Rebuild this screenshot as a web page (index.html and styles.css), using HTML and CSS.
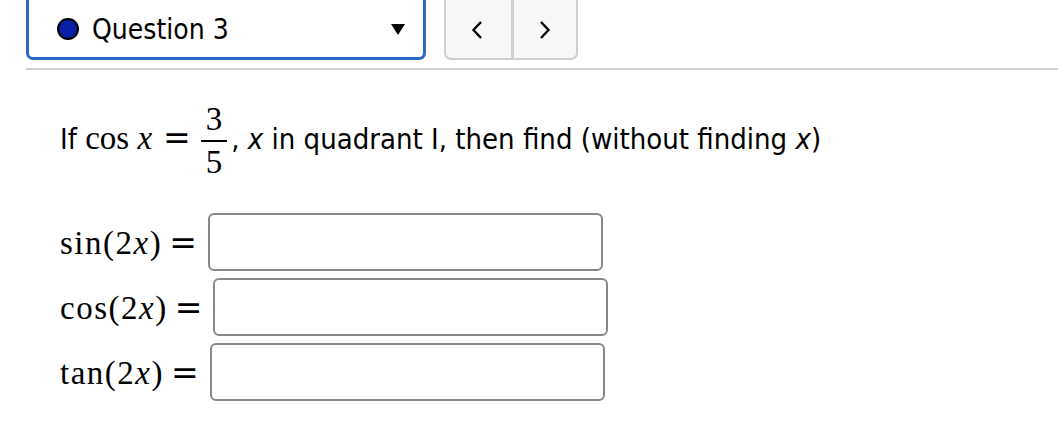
FILE: index.html
```html
<!DOCTYPE html>
<html lang="en">
<head>
    <meta charset="UTF-8">
    <title>Question 3</title>
    <link rel="stylesheet" href="styles.css">
</head>
<body>
    <div class="page">
        <div class="topbar">
            <div class="picker">
                <span class="dot"></span>
                <span class="picker-label">Question 3</span>
                <span class="caret"></span>
            </div>
            <div class="nav">
                <button class="nav-btn" aria-label="Previous">
                    <svg width="14" height="20" viewBox="0 0 14 20"><path d="M11 2 L3.5 10 L11 18" fill="none" stroke="#000" stroke-width="2.4"/></svg>
                </button>
                <button class="nav-btn" aria-label="Next">
                    <svg width="14" height="20" viewBox="0 0 14 20"><path d="M3 2 L10.5 10 L3 18" fill="none" stroke="#000" stroke-width="2.4"/></svg>
                </button>
            </div>
        </div>
        <hr class="rule">

        <div class="question">
            <p class="prompt">If <span class="math">cos <i>x</i><span class="eq">=</span><span class="frac"><span class="num">3</span><span class="den">5</span></span></span>, <i>x</i> in quadrant I, then find (without finding <i>x</i>)</p>

            <div class="answers">
                <div class="answer">
                    <span class="math label">sin(2<i>x</i>)<span class="eq">=</span></span>
                    <input class="box" type="text">
                </div>
                <div class="answer">
                    <span class="math label">cos(2<i>x</i>)<span class="eq">=</span></span>
                    <input class="box" type="text">
                </div>
                <div class="answer">
                    <span class="math label">tan(2<i>x</i>)<span class="eq">=</span></span>
                    <input class="box" type="text">
                </div>
            </div>
        </div>
    </div>
</body>
</html>
```

FILE: styles.css
```css
body {
    margin: 0;
    font-family: "DejaVu Sans Condensed", "DejaVu Sans", sans-serif;
    color: #000;
    background: #fff;
}
.page {
    padding-left: 26px;
}
.topbar {
    display: flex;
    align-items: flex-end;
    gap: 18px;
    margin-top: -8px;
}
.picker {
    box-sizing: border-box;
    width: 400px;
    height: 68px;
    border: 3px solid #2b66c8;
    border-radius: 7px;
    display: flex;
    align-items: center;
    padding: 6px 18px 0 28px;
}
.dot {
    box-sizing: border-box;
    width: 22px;
    height: 22px;
    border-radius: 50%;
    background: #0a1fa6;
    border: 2px solid #000;
    margin-right: 13px;
}
.picker-label {
    font-size: 28px;
    flex: 1;
}
.caret {
    width: 0;
    height: 0;
    border-left: 7px solid transparent;
    border-right: 7px solid transparent;
    border-top: 11px solid #000;
}
.nav {
    display: flex;
    height: 68px;
    box-sizing: border-box;
    border: 2px solid #cfcfcf;
    border-radius: 7px;
    background: #f7f7f7;
    overflow: hidden;
}
.nav-btn {
    width: 65px;
    border: 0;
    background: transparent;
    padding: 8px 0 0;
    display: flex;
    align-items: center;
    justify-content: center;
}
.nav-btn:first-child {
    padding-right: 4px;
}
.nav-btn + .nav-btn {
    border-left: 3px solid #cfcfcf;
}
.rule {
    margin: 8px 0 0;
    border: 0;
    border-top: 2px solid #cfcfcf;
}
.question {
    padding-left: 34px;
}
.prompt {
    font-size: 29px;
    margin: 33px 0 0;
    line-height: 1.2;
}
.math {
    font-family: "Liberation Serif", serif;
    font-size: 33px;
}
.prompt .math {
    margin: 0 4px 0 0;
}
.eq {
    font-family: "DejaVu Sans", sans-serif;
    margin: 0 10px 0 11px;
}
.frac {
    display: inline-flex;
    flex-direction: column;
    align-items: center;
    vertical-align: middle;
    line-height: 1;
}
.num {
    border-bottom: 2px solid #000;
    padding: 0 5px 4px;
}
.den {
    padding-top: 4px;
}
.answers {
    margin-top: 34px;
    display: flex;
    flex-direction: column;
    gap: 7px;
}
.answer {
    display: flex;
    align-items: center;
}
.label {
    white-space: nowrap;
    letter-spacing: 1.5px;
}
.label .eq {
    letter-spacing: 0;
    margin: 0 11px 0 7px;
}
.box {
    box-sizing: border-box;
    width: 395px;
    height: 58px;
    border: 2px solid #888;
    border-radius: 6px;
    background: #fff;
}
```
